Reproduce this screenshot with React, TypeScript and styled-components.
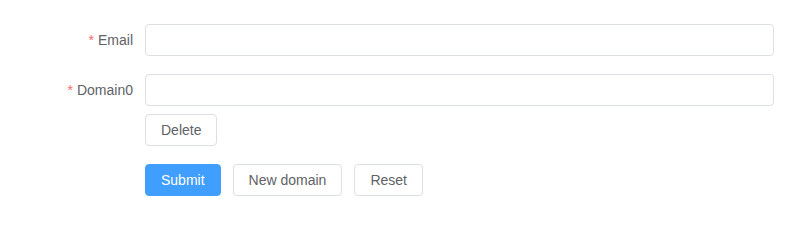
import React, { useState } from "react";
import styled, { createGlobalStyle } from "styled-components";

const GlobalStyle = createGlobalStyle`
    html, body {
        margin: 0;
        padding: 0;
        background: #fff;
        font-family: "Liberation Sans", Arial, sans-serif;
    }
`

const Form = styled.form`
    padding: 24px 23px 24px 24px;
`
const FormItem = styled.div`
    display: flex;
    margin-bottom: 18px;
`
const Label = styled.label`
    width: 121px;
    flex-shrink: 0;
    box-sizing: border-box;
    padding-right: 12px;
    text-align: right;
    font-size: 14px;
    line-height: 32px;
    color: #606266;
    &::before {
        content: "*";
        color: #f56c6c;
        margin-right: 4px;
    }
`
const LabelSpacer = styled.div`
    width: 121px;
    flex-shrink: 0;
`
const Content = styled.div`
    flex: 1;
    display: flex;
    flex-direction: column;
    align-items: flex-start;
    gap: 8px;
`
const Row = styled.div`
    display: flex;
    gap: 12px;
`
const Input = styled.input`
    width: 100%;
    box-sizing: border-box;
    height: 32px;
    padding: 0 15px;
    border: 1px solid #dcdfe6;
    border-radius: 4px;
    font-size: 14px;
    color: #606266;
    font-family: inherit;
    outline: none;
`
const Button = styled.button<{ $primary?: boolean }>`
    height: 32px;
    padding: 0 15px;
    border-radius: 4px;
    font-size: 14px;
    font-family: inherit;
    cursor: pointer;
    border: 1px solid ${props => props.$primary ? "#409eff" : "#dcdfe6"};
    background: ${props => props.$primary ? "#409eff" : "#fff"};
    color: ${props => props.$primary ? "#fff" : "#606266"};
`

function App() {
    const [email, setEmail] = useState("");
    const [domains, setDomains] = useState<string[]>([""]);

    const onDomain = (index: number, value: string) => {
        setDomains(prev => [...prev.slice(0, index), value, ...prev.slice(index + 1)]);
    }
    const onDelete = (index: number) => {
        setDomains(prev => prev.filter((_, i) => i !== index));
    }

    return (
        <>
            <GlobalStyle />
            <Form onSubmit={e => e.preventDefault()}>
                <FormItem>
                    <Label>Email</Label>
                    <Content>
                        <Input value={email} onChange={e => setEmail(e.target.value)} />
                    </Content>
                </FormItem>
                {domains.map((domain, index) => (
                    <FormItem key={index}>
                        <Label>{"Domain" + index}</Label>
                        <Content>
                            <Input value={domain} onChange={e => onDomain(index, e.target.value)} />
                            <Button type="button" onClick={() => onDelete(index)}>Delete</Button>
                        </Content>
                    </FormItem>
                ))}
                <FormItem>
                    <LabelSpacer />
                    <Row>
                        <Button $primary type="submit">Submit</Button>
                        <Button type="button" onClick={() => setDomains(prev => [...prev, ""])}>New domain</Button>
                        <Button type="button" onClick={() => { setEmail(""); setDomains([""]); }}>Reset</Button>
                    </Row>
                </FormItem>
            </Form>
        </>
    );
}

export default App;
